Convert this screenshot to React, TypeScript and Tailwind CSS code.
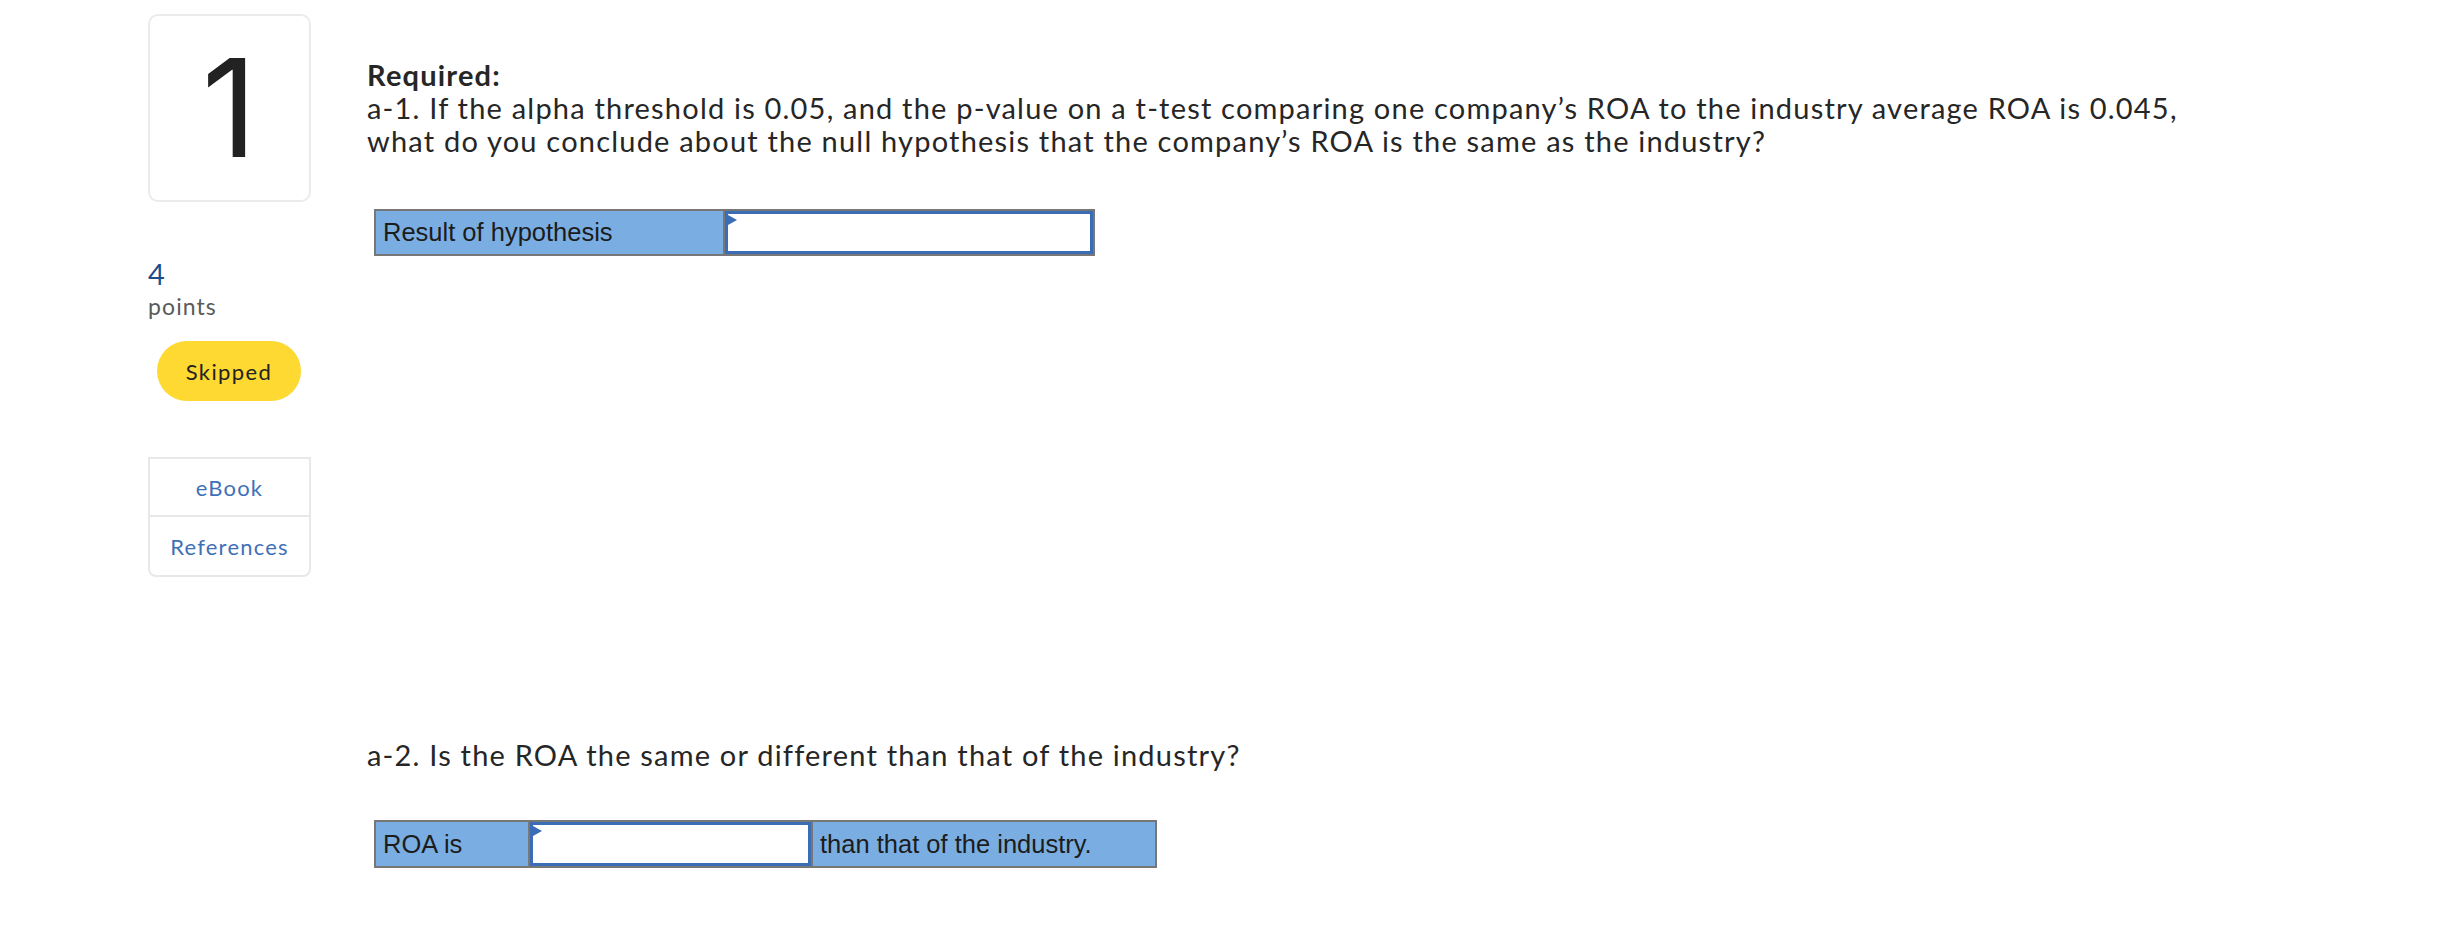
import React from 'react';

const Triangle = () => (
  <span className="absolute left-0 top-[1px] w-0 h-0 border-l-[9px] border-l-[#3a6db5] border-y-[5px] border-y-transparent" />
);

const InputCell = ({ width }: { width: string }) => (
  <div className={`relative bg-white border-[3px] border-[#3a6db5] ${width}`}>
    <Triangle />
  </div>
);

const LabelCell = ({ text, width }: { text: string; width: string }) => (
  <div className={`flex items-center bg-[#7aaee2] pl-[7px] text-[25.5px] text-[#1c1c1c] font-['Liberation_Sans',Arial,sans-serif] ${width}`}>
    {text}
  </div>
);

const App = () => {
  return (
    <div className="min-h-[932px] w-full bg-white font-['Lato','Noto_Sans',sans-serif] text-[#262626]">
      <div className="flex pl-[148px] pt-[14px] gap-[56px]">
        {/* left rail */}
        <div className="flex flex-col w-[163px] shrink-0">
          <div className="h-[188px] border-2 border-[#ebebeb] rounded-[10px] flex items-center justify-center">
            <span className="font-['Inter',sans-serif] text-[136px] leading-none text-[#222]">1</span>
          </div>
          <div className="mt-[55px] text-[29px] leading-[34px] text-[#1f4d8c]">4</div>
          <div className="text-[23px] leading-[30px] tracking-[1.1px] text-[#5a5a5a]">points</div>
          <div className="mt-[20px] ml-[9px] w-[144px] h-[60px] rounded-full bg-[#fdd932] flex items-center justify-center text-[22px] tracking-[1.4px] text-[#222]">
            Skipped
          </div>
          <div className="mt-[56px] border-2 border-[#e8e8e8] rounded-b-[8px] text-[#3f70b6] text-[22px] tracking-[1.2px]">
            <div className="h-[58px] flex items-center justify-center border-b-2 border-[#e8e8e8]">eBook</div>
            <div className="h-[58px] flex items-center justify-center">References</div>
          </div>
        </div>

        {/* question */}
        <div className="flex flex-col pt-[44px]">
          <div className="text-[29px] leading-[33px] tracking-[1.2px]">
            <div className="font-bold">Required:</div>
            <div>
              a-1. If the alpha threshold is 0.05, and the p-value on a t-test comparing one company’s ROA to the industry average ROA is 0.045,
            </div>
            <div>what do you conclude about the null hypothesis that the company’s ROA is the same as the industry?</div>
          </div>

          <div className="mt-[52px] ml-[7px] flex h-[47px] w-[721px] border-2 border-[#777]">
            <LabelCell text="Result of hypothesis" width="w-[347px]" />
            <div className="w-[2px] bg-[#777]" />
            <InputCell width="flex-1" />
          </div>

          <div className="mt-[482px] text-[29px] leading-[33px] tracking-[1.2px]">
            a-2. Is the ROA the same or different than that of the industry?
          </div>

          <div className="mt-[49px] ml-[7px] flex h-[48px] w-[783px] border-2 border-[#777]">
            <LabelCell text="ROA is" width="w-[152px]" />
            <div className="w-[2px] bg-[#777]" />
            <InputCell width="w-[281px]" />
            <div className="w-[2px] bg-[#777]" />
            <LabelCell text="than that of the industry." width="flex-1" />
          </div>
        </div>
      </div>
    </div>
  );
};

export default App;
